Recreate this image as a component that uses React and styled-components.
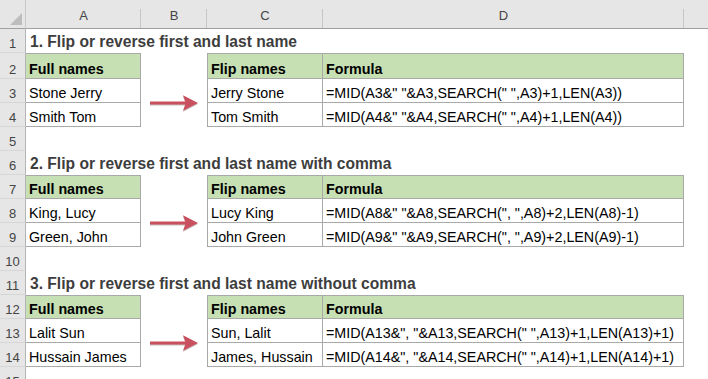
import React from "react";
import styled, { createGlobalStyle, css } from "styled-components";

const GlobalStyle = createGlobalStyle`
  html, body {
    margin: 0;
    padding: 0;
    background: #ffffff;
    overflow: hidden;
  }
  body {
    font-family: "Liberation Sans", Arial, sans-serif;
  }
`;

const tableBorder = "#a9a9a9";

const Sheet = styled.div`
  display: grid;
  grid-template-columns: 26px 115px 66px 116px 361px 1fr;
  grid-template-rows: 29px 24px 26px repeat(12, 24px) 24px;
  width: 708px;
  height: 379px;
  overflow: hidden;
  background: #ffffff;
`;

const HeadBase = css`
  box-sizing: border-box;
  background: #e6e6e6;
  color: #444444;
  font-size: 13px;
  display: flex;
`;

const Corner = styled.div`
  ${HeadBase};
  position: relative;
  border-bottom: 1px solid #a0a0a0;
  border-right: 1px solid #c8c8c8;
  justify-content: flex-end;
  align-items: flex-end;
  padding: 0 3px 3px 0;

  > span {
    width: 0;
    height: 0;
    border-left: 12px solid transparent;
    border-bottom: 12px solid #bdbdbd;
  }
`;

const ColHead = styled.div`
  ${HeadBase};
  position: relative;
  border-bottom: 1px solid #a0a0a0;
  justify-content: center;
  align-items: flex-end;
  padding-bottom: 5px;

  &::after {
    content: "";
    position: absolute;
    right: 0;
    top: 9px;
    bottom: 0;
    width: 1px;
    background: ${(p) => (p.$last ? "transparent" : "#c6c6c6")};
  }
`;

const RowHead = styled.div`
  ${HeadBase};
  border-right: 1px solid #b4b4b4;
  border-bottom: 1px solid #d6d6d6;
  justify-content: center;
  align-items: flex-end;
  padding-bottom: 1px;
  line-height: 15px;
`;

const Cell = styled.div`
  box-sizing: border-box;
  display: flex;
  align-items: flex-end;
  padding: 0 0 1px 3px;
  font-size: 14.3px;
  line-height: 16px;
  color: #000000;
  white-space: nowrap;
  grid-column: ${(p) => (p.$span ? `span ${p.$span}` : "auto")};
  background: ${(p) => (p.$fill ? "#c6e0b4" : "transparent")};
  font-weight: ${(p) => (p.$bold ? 700 : 400)};
  border-top: ${(p) => (p.$top ? `1px solid ${tableBorder}` : "none")};
  border-left: ${(p) => (p.$left ? `1px solid ${tableBorder}` : "none")};
  border-right: ${(p) => (p.$right ? `1px solid ${tableBorder}` : "none")};
  border-bottom: ${(p) => (p.$bottom ? `1px solid ${tableBorder}` : "none")};
`;

const Title = styled.div`
  grid-column: span 5;
  display: flex;
  align-items: flex-end;
  padding: 0 0 2px 4px;
  font-size: 15.6px;
  line-height: 18px;
  font-weight: 700;
  color: #3d3d3d;
  white-space: nowrap;
`;

const ArrowCell = styled.div`
  grid-row: span 2;
  display: flex;
  align-items: center;
  justify-content: center;
  padding-bottom: 1px;

  > svg {
    filter: drop-shadow(0 1px 0.6px rgba(90, 60, 60, 0.35));
  }
`;

const Arrow = () => (
  <svg width="50" height="18" viewBox="0 0 50 18">
    <path d="M1 7.6 H37 V10.4 H1 Z" fill="#c9515f" />
    <path d="M34 1.2 L49 9 L34 16.8 L36.8 9 Z" fill="#c9515f" />
  </svg>
);

const sections = [
  {
    title: "1. Flip or reverse first and last name",
    rows: [
      ["Stone Jerry", "Jerry Stone", '=MID(A3&" "&A3,SEARCH(" ",A3)+1,LEN(A3))'],
      ["Smith Tom", "Tom Smith", '=MID(A4&" "&A4,SEARCH(" ",A4)+1,LEN(A4))'],
    ],
  },
  {
    title: "2. Flip or reverse first and last name with comma",
    rows: [
      ["King, Lucy", "Lucy King", '=MID(A8&" "&A8,SEARCH(", ",A8)+2,LEN(A8)-1)'],
      ["Green, John", "John Green", '=MID(A9&" "&A9,SEARCH(", ",A9)+2,LEN(A9)-1)'],
    ],
  },
  {
    title: "3. Flip or reverse first and last name without comma",
    rows: [
      ["Lalit Sun", "Sun, Lalit", '=MID(A13&", "&A13,SEARCH(" ",A13)+1,LEN(A13)+1)'],
      ["Hussain James", "James, Hussain", '=MID(A14&", "&A14,SEARCH(" ",A14)+1,LEN(A14)+1)'],
    ],
  },
];

const columns = ["A", "B", "C", "D", ""];

const Section = ({ index, title, rows }) => {
  const start = index * 5 + 1;
  return (
    <>
      <RowHead>{start}</RowHead>
      <Title>{title}</Title>

      <RowHead>{start + 1}</RowHead>
      <Cell $fill $bold $top $right $bottom>Full names</Cell>
      <Cell />
      <Cell $fill $bold $top $left $right $bottom>Flip names</Cell>
      <Cell $fill $bold $top $right $bottom>Formula</Cell>
      <Cell />

      {rows.map(([full, flip, formula], i) => (
        <React.Fragment key={full}>
          <RowHead>{start + 2 + i}</RowHead>
          <Cell $right $bottom>{full}</Cell>
          {i === 0 && (
            <ArrowCell>
              <Arrow />
            </ArrowCell>
          )}
          <Cell $left $right $bottom>{flip}</Cell>
          <Cell $right $bottom>{formula}</Cell>
          <Cell />
        </React.Fragment>
      ))}

      <RowHead>{start + 4}</RowHead>
      <Cell $span={5} />
    </>
  );
};

export default function App() {
  return (
    <>
      <GlobalStyle />
      <Sheet>
        <Corner>
          <span />
        </Corner>
        {columns.map((c, i) => (
          <ColHead key={i} $last={i === columns.length - 1}>
            {c}
          </ColHead>
        ))}
        {sections.map((s, i) => (
          <Section key={i} index={i} title={s.title} rows={s.rows} />
        ))}
      </Sheet>
    </>
  );
}
